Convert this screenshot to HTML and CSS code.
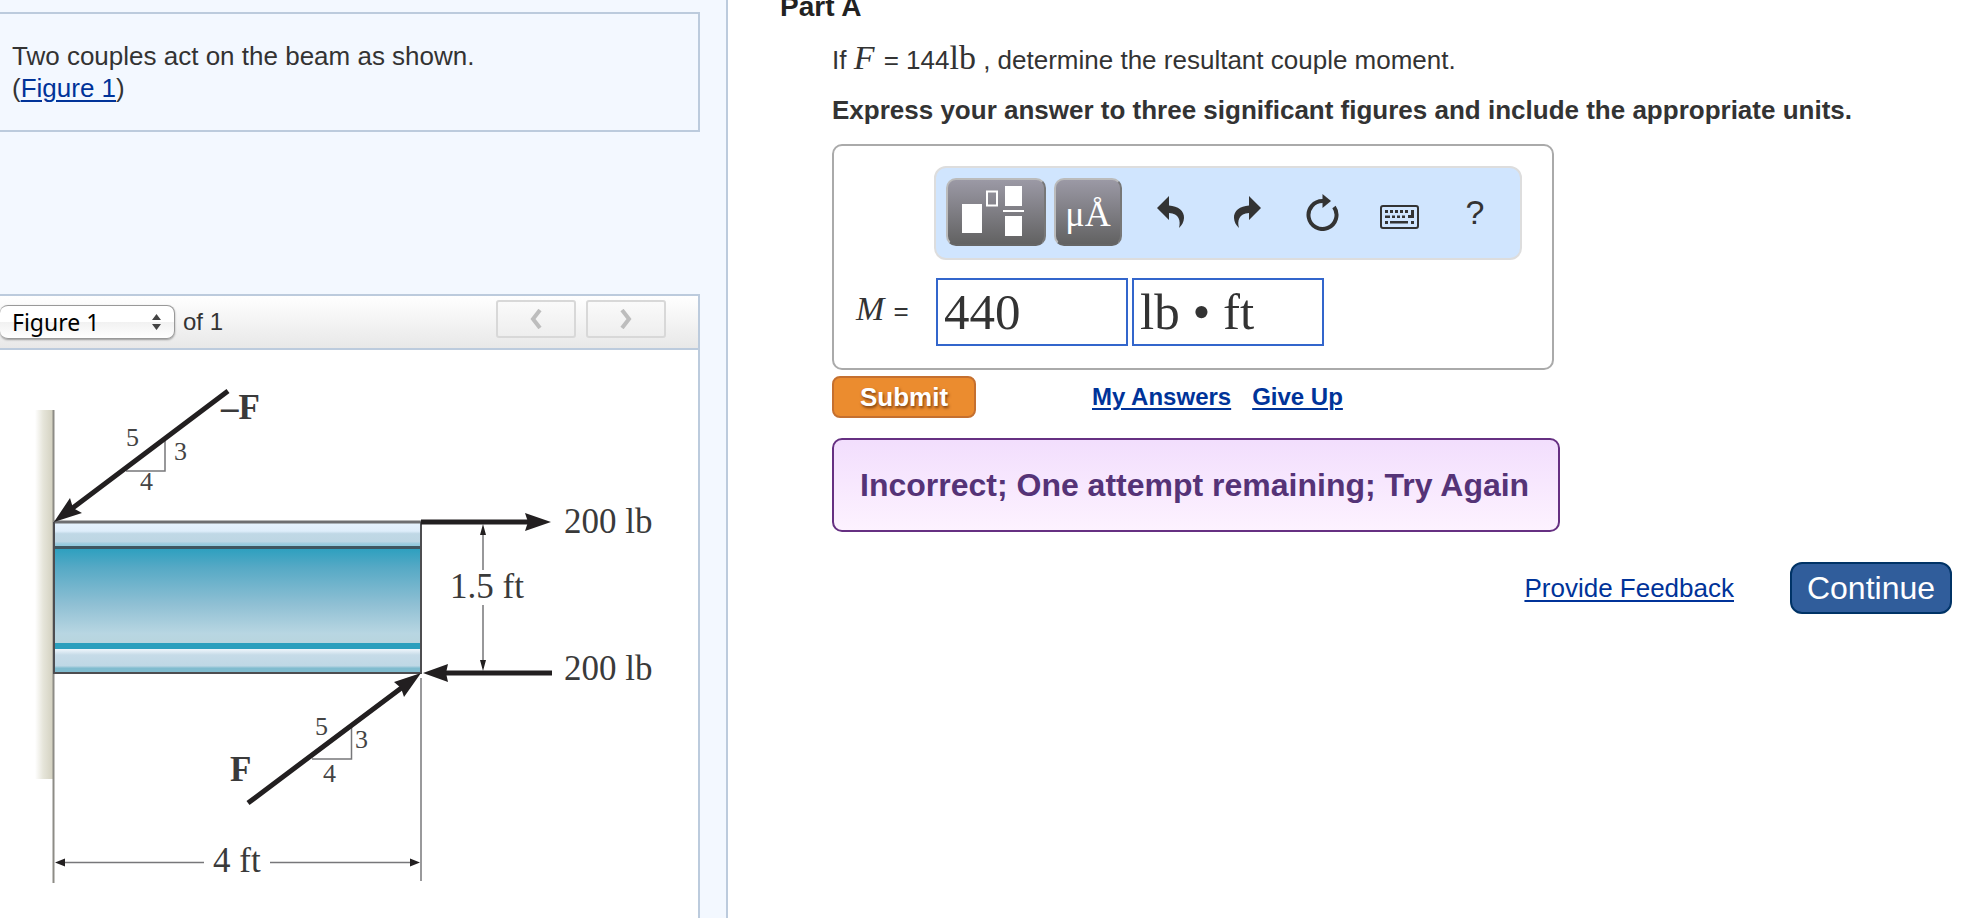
FILE: index.html
```html
<!DOCTYPE html>
<html lang="en">
<head>
<meta charset="utf-8">
<title>Couple moment problem</title>
<link rel="stylesheet" href="styles.css">
</head>
<body>
<div class="page">
  <aside class="sidebar">
    <section class="prompt">
      <p>Two couples act on the beam as shown.<br>(<a href="#figure">Figure 1</a>)</p>
    </section>
    <section class="figure-panel" id="figure">
      <div class="figure-bar">
        <span class="select-wrap">
          <select class="figure-select" id="figure-select" aria-label="Figure"><option>Figure 1</option></select>
          <svg class="select-arrows" width="9" height="18" viewBox="0 0 9 18" aria-hidden="true"><path d="M4.5 1L9 7H0zM4.5 17L9 11H0z" fill="#444"/></svg>
        </span>
        <label class="figure-count" for="figure-select">of 1</label>
        <div class="pager">
          <button class="pager-button" type="button" aria-label="Previous figure"><svg width="14" height="20" viewBox="0 0 14 20"><path d="M11 1L4 10l7 9" fill="none" stroke="#bdbdbd" stroke-width="4"/></svg></button>
          <button class="pager-button" type="button" aria-label="Next figure"><svg width="14" height="20" viewBox="0 0 14 20"><path d="M3 1l7 9-7 9" fill="none" stroke="#bdbdbd" stroke-width="4"/></svg></button>
        </div>
      </div>
      <svg class="diagram" viewBox="0 0 698 568" role="img" aria-label="Beam with two couples">
        <defs>
          <linearGradient id="wall"><stop offset="0" stop-color="#fff"/><stop offset=".45" stop-color="#e6e5da"/><stop offset="1" stop-color="#d3d1c0"/></linearGradient>
          <linearGradient id="web" x2="0" y2="1"><stop offset="0" stop-color="#2c9fbf"/><stop offset=".2" stop-color="#55a9c5"/><stop offset=".6" stop-color="#90c0d4"/><stop offset=".9" stop-color="#b8d6e2"/><stop offset="1" stop-color="#b8d5de"/></linearGradient>
          <linearGradient id="flange" x2="0" y2="1"><stop offset="0" stop-color="#e6f3ff"/><stop offset=".35" stop-color="#deedfa"/><stop offset=".45" stop-color="#c0d8e6"/><stop offset=".75" stop-color="#bdd6e3"/><stop offset=".85" stop-color="#98cbdd"/><stop offset="1" stop-color="#90c8db"/></linearGradient>
          <linearGradient id="foot" x2="0" y2="1"><stop offset="0" stop-color="#f0f6fc"/><stop offset=".25" stop-color="#c6dbe8"/><stop offset=".7" stop-color="#bfd8e5"/><stop offset=".8" stop-color="#80bccf"/><stop offset="1" stop-color="#80bccf"/></linearGradient>
        </defs>
        <rect x="35" y="60" width="18" height="369" fill="url(#wall)"/>
        <path d="M53.5 60V533" stroke="#8d8c86" stroke-width="2"/>
        <rect x="54" y="172" width="367" height="26" fill="url(#flange)"/>
        <rect x="54" y="198" width="367" height="95" fill="url(#web)"/>
        <rect x="54" y="293" width="367" height="6" fill="#2b9fbd"/>
        <rect x="54" y="299" width="367" height="24" fill="url(#foot)"/>
        <path d="M54 172H421" stroke="#6d6e71" stroke-width="3"/>
        <path d="M54 197.500H421" stroke="#3f5660" stroke-width="3"/>
        <path d="M54 172V323H421V172" fill="none" stroke="#4d4d50" stroke-width="2"/>
        <path d="M421 328V531" stroke="#77777a" stroke-width="1.500"/>
        <g stroke="#77777a" stroke-width="1.500" fill="none">
          <path d="M165 90V121H126M351.500 377V409H312"/>
          <path d="M483 180V220M483 255V318M60 512.500H204M270 512.500H416"/>
        </g>
        <g stroke="#221f20" stroke-width="5">
          <path d="M228 41L70 160M421 172H530M552 323H445M248 453L404 336"/>
        </g>
        <g fill="#221f20">
          <path d="M54 172L70 148L73 158L82 163Z"/>
          <path d="M551 172L525 163L528 172L525 181Z"/>
          <path d="M423 323L448 314L446 323L448 332Z"/>
          <path d="M421 323L394 332L401 338L404 347Z"/>
          <path d="M483 174l3 11h-6zM483 321l3-11h-6zM55 512.500l10-4v8zM420 512.500l-10-4v8z"/>
        </g>
        <g class="small">
          <text x="126" y="96">5</text><text x="174" y="110">3</text><text x="140" y="140">4</text>
          <text x="315" y="385">5</text><text x="355" y="398">3</text><text x="323" y="432">4</text>
        </g>
        <g class="big">
          <text class="force" x="221" y="69">–F</text><text class="force" x="230" y="431">F</text>
          <text x="564" y="183">200 lb</text><text x="564" y="330">200 lb</text>
          <text x="450" y="248">1.5 ft</text><text x="213" y="522">4 ft</text>
        </g>
      </svg>
    </section>
  </aside>

  <main class="content">
    <h2 class="part">Part A</h2>
    <div class="question">
      <p class="statement">If <i class="math">F</i> = 144<span class="math unit">lb</span>&nbsp;, determine the resultant couple moment.</p>
      <p class="instructions">Express your answer to three significant figures and include the appropriate units.</p>
      <form class="answer">
        <div class="toolbar">
          <button class="tool templates" type="button" aria-label="Templates"><svg width="96" height="64" viewBox="2 2 96 64"><path fill="#fff" d="M16 26h20v29H16zM59 8h17v20H59zM57 32h21v2H57zM59 38h17v20H59z"/><path d="M41 13.500h10v14H41z" fill="none" stroke="#fff" stroke-width="2"/></svg></button>
          <button class="tool symbols" type="button">μÅ</button>
          <div class="actions">
            <button class="action" type="button" aria-label="Undo"><svg width="28" height="32" viewBox="0 0 28 32"><path d="M0 12L12 0V9.500C21 10 27.500 15 27 22C26.800 26 25 29 22 32C24 25 22 17.500 12 17V24Z"/></svg></button>
            <button class="action" type="button" aria-label="Redo"><svg width="28" height="32" viewBox="0 0 28 32"><path d="M28 12L16 0V9.500C7 10 .5 15 1 22C1.200 26 3 29 6 32C4 25 6 17.500 16 17V24Z"/></svg></button>
            <button class="action" type="button" aria-label="Reset"><svg width="34" height="38" viewBox="0 0 34 38"><path d="M28 14A14 14 0 1 1 17 8" fill="none" stroke="#333" stroke-width="4"/><path d="M16.500 1L25 8L16.500 15Z"/></svg></button>
            <button class="action keyboard" type="button" aria-label="Keyboard shortcuts"><svg width="39" height="24" viewBox="0 0 39 24"><rect x="1" y="1" width="37" height="22" rx="2" fill="none" stroke="#333" stroke-width="2"/><path d="M5 5h3v3H5zM10 5h3v3h-3zM15 5h3v3h-3zM20 5h3v3h-3zM25 5h3v3h-3zM31 5h3v8h-6v-3h3zM5 10.500h5v2.500H5zM12 10.500h3v2.500h-3zM17 10.500h3v2.500h-3zM22 10.500h3v2.500h-3zM5 16h3v3H5zM10 16h18v2.500H10zM31 16h3v3h-3z"/></svg></button>
            <button class="action help" type="button">?</button>
          </div>
        </div>
        <div class="entry">
          <label class="entry-label" for="value"><i class="math">M</i> =</label>
          <input class="field" id="value" type="text" value="440">
          <input class="field" type="text" value="lb • ft" aria-label="Units">
        </div>
      </form>
      <div class="submit-row">
        <button class="submit" type="button">Submit</button>
        <a href="#answers">My Answers</a>
        <a href="#giveup">Give Up</a>
      </div>
      <div class="feedback">Incorrect; One attempt remaining; Try Again</div>
    </div>
    <div class="footer">
      <a href="#feedback">Provide Feedback</a>
      <button class="continue" type="button">Continue</button>
    </div>
  </main>
</div>
</body>
</html>
```

FILE: styles.css
```css
* { box-sizing: border-box; }

body {
  margin: 0;
  background: #fff;
  color: #333;
  font: 26px/32px "Liberation Sans", Arial, sans-serif;
}

p, h2 { margin: 0; }
a { color: #039; text-underline-offset: 3px; text-decoration-thickness: 2px; }
button, input, select { font: inherit; color: inherit; margin: 0; }
button { padding: 0; cursor: pointer; }
svg { display: block; }

.page {
  display: grid;
  grid-template-columns: 728px 1fr;
  min-height: 100vh;
}

/* Left column */
.sidebar {
  display: flex;
  flex-direction: column;
  gap: 162px;
  padding: 12px 26px 0 0;
  background: #f3f8ff;
  border-right: 2px solid #bccbdd;
}

.prompt {
  padding: 26px 12px;
  border: 2px solid #bccbdd;
  border-left: 0;
}

.figure-panel {
  flex: 1;
  background: #fff;
  border: solid #bccbdd;
  border-width: 2px 2px 0 0;
}

.figure-bar {
  display: flex;
  align-items: center;
  height: 54px;
  padding-right: 32px;
  background: linear-gradient(#fff, #e8e8e8);
  border-bottom: 2px solid #bccbdd;
}

.select-wrap {
  display: grid;
  align-items: center;
  width: 175px;
  margin-right: 8px;
}

.select-wrap > * { grid-area: 1 / 1; }

.figure-select {
  appearance: none;
  height: 34px;
  padding: 0 12px;
  color: #000;
  font: 23px/30px "Noto Sans", sans-serif;
  background: linear-gradient(#fff 50%, #f1f1f1 50%, #fff);
  border: 1px solid #999;
  border-left: 0;
  border-radius: 8px;
  box-shadow: 0 1px 2px #999;
}

.select-arrows {
  justify-self: end;
  margin-right: 14px;
  pointer-events: none;
}

.figure-count { font-size: 24px; }

.pager {
  display: flex;
  gap: 10px;
  margin-left: auto;
  padding-bottom: 6px;
}

.pager-button {
  display: grid;
  place-items: center;
  width: 80px;
  height: 38px;
  background: linear-gradient(#fafafa, #eee);
  border: 2px solid #d8d8d8;
  border-radius: 3px;
}

.diagram { width: 100%; height: auto; }
.small { font: 26px "Liberation Serif", serif; fill: #444; }
.big { font: 35px "Liberation Serif", serif; fill: #3a3a3a; }
.force { font-weight: bold; }

/* Right column */
.content { padding-left: 52px; }
.part { color: #222; font-size: 28px; line-height: 14px; }
.question { padding: 25px 0 0 52px; }
.math { margin-right: 2px; font-family: "Liberation Serif", serif; font-size: 34px; }
.unit { margin-right: 0; }
.statement { line-height: 38px; }
.instructions { padding: 15px 0 18px; font-weight: bold; }

.answer {
  max-width: 722px;
  padding: 20px 30px 22px 22px;
  border: 2px solid #aaa;
  border-radius: 10px;
}

.toolbar {
  display: flex;
  gap: 8px;
  margin-left: 78px;
  padding: 10px 6px 12px 10px;
  background: #d0e5fe;
  border: 2px solid #ddd;
  border-radius: 12px;
}

.tool {
  display: grid;
  flex: none;
  place-items: center;
  height: 68px;
  color: #fff;
  background: linear-gradient(#9b99a5, #626262);
  border: 2px solid;
  border-color: #bbb #777 #666 #bbb;
  border-radius: 10px;
}

.templates { width: 100px; }
.symbols { width: 68px; padding-top: 4px; font: 36px/60px "Liberation Serif", serif; }

.actions { display: flex; padding-left: 3px; }

.action {
  display: grid;
  place-items: center;
  width: 76px;
  background: none;
  border: 0;
  fill: #333;
}

.keyboard { padding-top: 10px; }
.help { font-size: 34px; }

.entry {
  display: flex;
  align-items: center;
  gap: 4px;
  padding-top: 18px;
}

.entry-label { width: 76px; padding-bottom: 4px; }

.field {
  width: 192px;
  height: 68px;
  padding: 0 6px;
  font: 51px/60px "Liberation Serif", serif;
  background: #fff;
  border: 2px solid #36c;
  border-radius: 0;
}

.submit-row {
  display: flex;
  align-items: center;
  gap: 21px;
  padding-top: 6px;
  font-size: 24px;
  font-weight: bold;
}

.submit {
  width: 144px;
  height: 42px;
  margin-right: 95px;
  color: #fff;
  font-size: 26px;
  font-weight: bold;
  text-shadow: 1px 2px 3px #7a3d10;
  background: #eb8c2f;
  border: 2px solid #c5702f;
  border-radius: 8px;
}

.feedback {
  max-width: 728px;
  margin-top: 20px;
  padding: 28px 26px;
  color: #537;
  font-size: 32px;
  font-weight: bold;
  line-height: 34px;
  background: linear-gradient(#f2defd, #fdf2ff);
  border: 2px solid #663082;
  border-radius: 10px;
}

.footer {
  display: flex;
  align-items: center;
  justify-content: flex-end;
  gap: 56px;
  padding: 30px 30px 0 0;
}

.continue {
  width: 162px;
  height: 52px;
  color: #fff;
  font-size: 32px;
  background: #305d9b;
  border: 2px solid #036;
  border-radius: 12px;
}
```
